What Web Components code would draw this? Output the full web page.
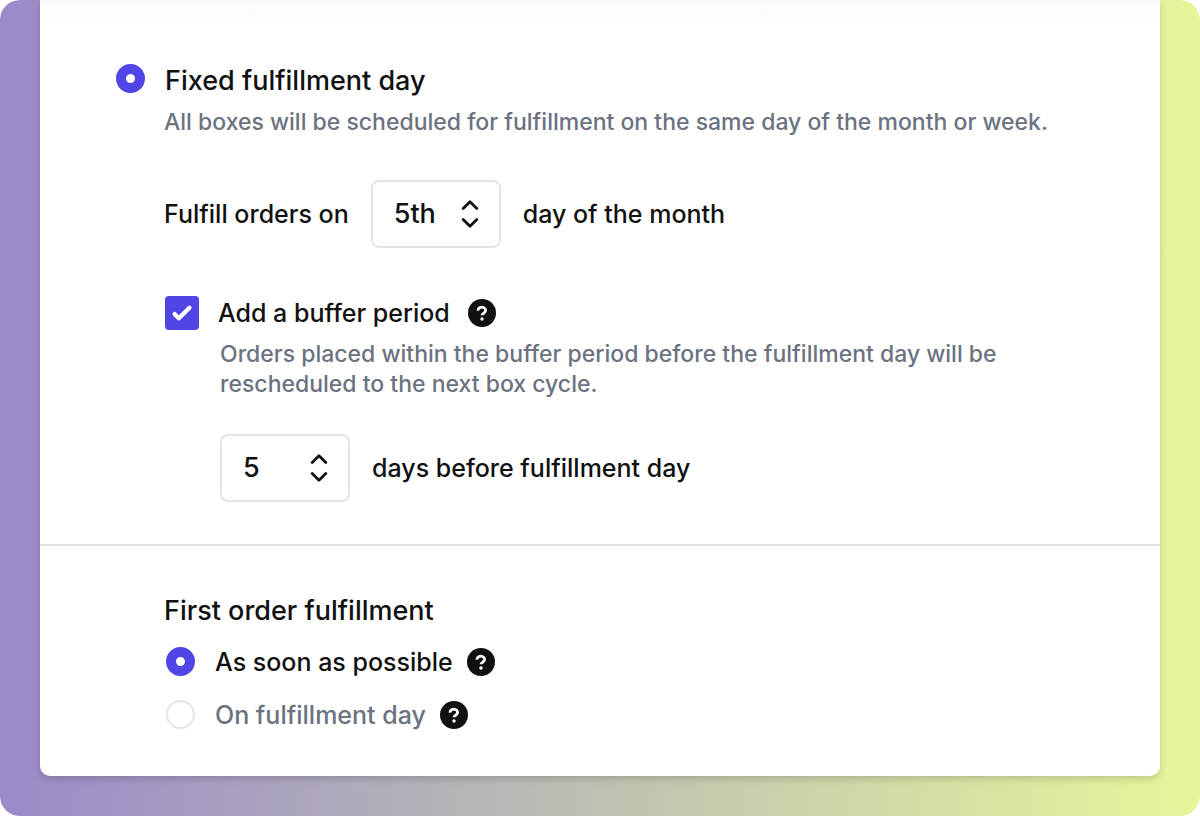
<!DOCTYPE html>
<html lang="en">
<head>
<meta charset="utf-8">
<meta name="viewport" content="width=device-width, initial-scale=1">
<title>Fulfillment settings</title>
<style>
    body {margin: 0; background: #fff;}
</style>
</head>
<body>
<settings-page></settings-page>
<script>
class HelpTip extends HTMLElement {
    constructor() {
        super();
        this.shadow = this.attachShadow({ mode: 'open' });
    }

    connectedCallback() {
        this.shadow.innerHTML = `
<style>
    :host {display: block; flex: none;}
    button {display: block; width: 28px; height: 28px; padding: 0; border: 0; border-radius: 50%;
        background: none; color: inherit; cursor: pointer;}
    svg {display: block; width: 28px; height: 28px;}
</style>
<button type="button" aria-label="Help">
    <svg viewBox="0 0 28 28" aria-hidden="true">
        <circle cx="14" cy="14" r="14" fill="#111"/>
        <path d="M10 11.6a3.8 3.2 0 1 1 6 2.4c-1.2.8-2 1.1-2 2.3" fill="none" stroke="#fff" stroke-width="2.8"/>
        <circle cx="14" cy="20" r="1.7" fill="#fff"/>
    </svg>
</button>`
    }
}
window.customElements.define('help-tip', HelpTip);

class RadioOption extends HTMLElement {
    constructor() {
        super();
        this.shadow = this.attachShadow({ mode: 'open' });
    }

    connectedCallback() {
        this.render();
        let input = this.shadow.querySelector('input');
        input.checked = this.hasAttribute('checked');
        input.addEventListener('change', this.onChange.bind(this));
    }

    // inputs in separate shadow roots do not share a group, so clear the others here
    onChange() {
        let name = this.getAttribute('name');
        this.setAttribute('checked', '');
        this.getRootNode().querySelectorAll('radio-option').forEach(x => {
            if (x !== this && x.getAttribute('name') === name) {
                x.removeAttribute('checked');
                x.shadow.querySelector('input').checked = false;
            }
        })
    }

    render() {
        this.shadow.innerHTML = `
<style>
    :host {display: flex; align-items: center; gap: 20px; font-size: 25px; line-height: 28px; color: #6b7280;}
    :host([checked]) {color: #111;}
    :host([large]) {align-items: flex-start; font-size: 27px; line-height: 34px;}
    input {appearance: none; flex: none; box-sizing: border-box; width: 29px; height: 29px; margin: 0;
        border: 2px solid #e5e5e5; border-radius: 50%; background: #fff;}
    input:checked {border: 10px solid #4f46e5;}
</style>
<input id="opt" type="radio">
<label for="opt"><slot></slot></label>`
    }
}
window.customElements.define('radio-option', RadioOption);

class CheckOption extends HTMLElement {
    constructor() {
        super();
        this.shadow = this.attachShadow({ mode: 'open' });
    }

    connectedCallback() {
        this.shadow.innerHTML = `
<style>
    :host {display: flex; align-items: center; gap: 19px; font-size: 25px; line-height: 34px;}
    .box {position: relative; flex: none; width: 34px; height: 34px;}
    input {appearance: none; display: block; box-sizing: border-box; width: 100%; height: 100%; margin: 0;
        border: 2px solid #e5e5e5; border-radius: 4px; background: #fff;}
    input:checked {border-color: #4f46e5; background: #4f46e5;}
    svg {position: absolute; inset: 0; display: none; pointer-events: none;}
    input:checked + svg {display: block;}
</style>
<span class="box">
    <input id="chk" type="checkbox">
    <svg viewBox="0 0 16 16" fill="#fff" aria-hidden="true"><path d="M12.207 4.793a1 1 0 010 1.414l-5 5a1 1 0 01-1.414 0l-2-2a1 1 0 011.414-1.414L6.5 9.086l4.293-4.293a1 1 0 011.414 0z"/></svg>
</span>
<label for="chk"><slot></slot></label>`
        this.shadow.querySelector('input').checked = this.hasAttribute('checked');
    }
}
window.customElements.define('check-option', CheckOption);

class SelectBox extends HTMLElement {
    constructor() {
        super();
        this.shadow = this.attachShadow({ mode: 'open' });
    }

    connectedCallback() {
        this.render();
        this.shadow.querySelector('.before').innerText = this.getAttribute('before') || '';
        this.shadow.querySelector('.after').innerText = this.getAttribute('after') || '';
        this.createOptions(this.getAttribute('options').split(','));
    }

    createOptions(list) {
        let select = this.shadow.querySelector('select');
        list.forEach(x => {
            let option = document.createElement('option');
            option.appendChild(document.createTextNode(x.trim()));
            select.appendChild(option);
        })
        select.value = this.getAttribute('value');
    }

    render() {
        this.shadow.innerHTML = `
<style>
    :host {display: flex; align-items: center; gap: 22px; font-size: 25px; line-height: 30px;}
    .before:empty {display: none;}
    .field {position: relative; flex: none;}
    select {appearance: none; display: block; box-sizing: border-box; width: 130px; height: 68px; margin: 0;
        padding: 0 40px 0 21px; border: 2px solid #e5e5e5; border-radius: 8px; background: #fff;
        color: inherit; font: inherit; font-size: 27px;}
    svg {position: absolute; top: 20px; right: 21px; width: 20px; height: 28px; pointer-events: none;}
</style>
<label class="before" for="sel"></label>
<span class="field">
    <select id="sel"></select>
    <svg viewBox="0 0 20 28" fill="none" stroke="#111" stroke-width="2.8" stroke-linecap="round" stroke-linejoin="round" aria-hidden="true"><path d="M3.2 8.6L10 1.8l6.8 6.8M3.2 19.4l6.8 6.8 6.8-6.8"/></svg>
</span>
<label class="after" for="sel"></label>`
    }
}
window.customElements.define('select-box', SelectBox);

class SettingsSection extends HTMLElement {
    constructor() {
        super();
        this.shadow = this.attachShadow({ mode: 'open' });
    }

    connectedCallback() {
        this.shadow.innerHTML = `
<style>
    :host {display: block; padding: 64px 76px 42px;}
    :host(:not(:first-of-type)) {padding: 45px 76px 47px 124px; border-top: 2px solid #e5e5e5;}
</style>
<slot></slot>`
    }
}
window.customElements.define('settings-section', SettingsSection);

class SettingsPage extends HTMLElement {
    constructor() {
        super();
        this.shadow = this.attachShadow({ mode: 'open' });
    }

    connectedCallback() {
        this.render();
    }

    render() {
        this.shadow.innerHTML = `
<style>
    :host {display: block; box-sizing: border-box; min-height: 100vh; padding: 0 40px 40px; border-radius: 20px;
        background: linear-gradient(90deg, #9a8ac9, #e7f69a);
        color: #111; font-family: Inter, "Liberation Sans", sans-serif; font-size: 25px; font-weight: 500;}
    main {border-radius: 0 0 10px 10px; background: linear-gradient(#f9f9f9, #fff 22px);
        box-shadow: 0 3px 7px rgba(0, 0, 0, .16);}
    h2, p {margin: 0; font-weight: inherit;}
    h2 {font-size: 27px; line-height: 40px;}
    p {color: #6b7280; font-size: 23px; line-height: 30px;}
    .body {padding-left: 48px;}
    .body > p {margin: 9px 0 43px;}
    .line {display: flex; align-items: center; gap: 18px;}
    .buffer {margin: 48px 0 0 1px;}
    .nested {padding-left: 56px;}
    .nested p {max-width: 800px; margin: 9px 0 35px;}
    .options {display: grid; gap: 24px; margin: 16px 0 0 2px;}
    .options .line {gap: 14px;}
</style>
<main>
    <settings-section>
        <radio-option name="schedule" large checked>Fixed fulfillment day</radio-option>
        <div class="body">
            <p>All boxes will be scheduled for fulfillment on the same day of the month or week.</p>
            <select-box before="Fulfill orders on" after="day of the month" value="5th"
                options="1st,2nd,3rd,4th,5th,6th,7th,8th,9th,10th"></select-box>
            <div class="line buffer">
                <check-option checked>Add a buffer period</check-option>
                <help-tip></help-tip>
            </div>
            <div class="nested">
                <p>Orders placed within the buffer period before the fulfillment day will be rescheduled to the next box cycle.</p>
                <select-box after="days before fulfillment day" value="5" options="1,2,3,4,5,6,7"></select-box>
            </div>
        </div>
    </settings-section>
    <settings-section>
        <h2>First order fulfillment</h2>
        <div class="options">
            <div class="line">
                <radio-option name="first" checked>As soon as possible</radio-option>
                <help-tip></help-tip>
            </div>
            <div class="line">
                <radio-option name="first">On fulfillment day</radio-option>
                <help-tip></help-tip>
            </div>
        </div>
    </settings-section>
</main>`
    }
}
window.customElements.define('settings-page', SettingsPage);
</script>
</body>
</html>
